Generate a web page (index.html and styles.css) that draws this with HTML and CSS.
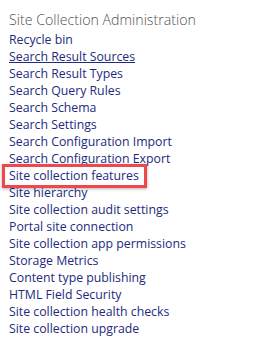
FILE: index.html
```html
<!DOCTYPE html>
<html>
<head>
<meta charset="utf-8">
<link rel="stylesheet" href="styles.css">
</head>
<body>
<div class="panel">
  <h2 class="title">Site Collection Administration</h2>
  <ul class="links">
    <li><a href="#">Recycle bin</a></li>
    <li><a href="#" class="hover">Search Result Sources</a></li>
    <li><a href="#">Search Result Types</a></li>
    <li><a href="#">Search Query Rules</a></li>
    <li><a href="#">Search Schema</a></li>
    <li><a href="#">Search Settings</a></li>
    <li><a href="#">Search Configuration Import</a></li>
    <li><a href="#">Search Configuration Export</a></li>
    <li class="marked"><a href="#">Site collection features</a></li>
    <li><a href="#">Site hierarchy</a></li>
    <li><a href="#">Site collection audit settings</a></li>
    <li><a href="#">Portal site connection</a></li>
    <li><a href="#">Site collection app permissions</a></li>
    <li><a href="#">Storage Metrics</a></li>
    <li><a href="#">Content type publishing</a></li>
    <li><a href="#">HTML Field Security</a></li>
    <li><a href="#">Site collection health checks</a></li>
    <li><a href="#">Site collection upgrade</a></li>
  </ul>
</div>
</body>
</html>
```

FILE: styles.css
```css
html, body {
  margin: 0;
  padding: 0;
  background: #ffffff;
}
.panel {
  padding: 10px 0 0 9px;
  font-family: "Open Sans", "Liberation Sans", sans-serif;
}
.title {
  margin: 0 0 1px 0;
  font-size: 14.2px;
  font-weight: 300;
  color: #505050;
  line-height: 20px;
}
.links {
  list-style: none;
  margin: 0;
  padding: 0;
}
.links li {
  line-height: 17px;
  font-size: 12.3px;
}
.links a {
  color: #232a7e;
  text-decoration: none;
}
.links a.hover {
  text-decoration: underline;
}
.links li.marked {
  position: relative;
}
.links li.marked::after {
  content: "";
  position: absolute;
  left: -7px;
  top: -3px;
  width: 139px;
  height: 18px;
  border: 3px solid #f0474d;
  box-shadow: 0 1px 3px rgba(0,0,0,0.3);
}
```
